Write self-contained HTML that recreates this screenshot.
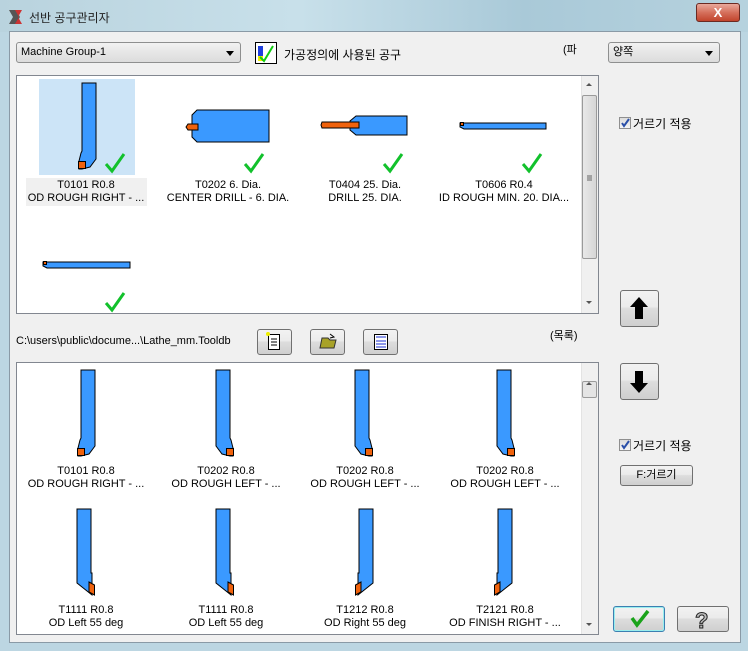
<!DOCTYPE html>
<html><head><meta charset="utf-8"><style>
*{margin:0;padding:0;box-sizing:border-box}
body{width:748px;height:651px;overflow:hidden;position:relative;background:#bcd6e2;font-family:"Liberation Sans","Noto Sans CJK KR",sans-serif;font-size:11px;color:#000}
.a{position:absolute}
.title{left:0;top:0;width:748px;height:32px;background:linear-gradient(90deg,#b9d3de,#c8e0ea 40%,#a9c9d8 70%,#b6d2de);}
.client{left:9px;top:31px;width:732px;height:612px;background:#f0f0f0;border:1px solid #8a9aa6}
.box{background:#fff;border:1px solid #828790}
.combo{height:21px;border:1px solid #8e8f8f;border-radius:3px;background:linear-gradient(#f2f2f2,#e6e6e6 50%,#dcdcdc);font-size:11px;line-height:19px;padding-left:4px}
.combo:after{content:"";position:absolute;right:6px;top:8px;border:4px solid transparent;border-top:5px solid #000}
.btn{border:1px solid #707070;border-radius:3px;background:linear-gradient(#f2f2f2,#ebebeb 45%,#dddddd 50%,#cfcfcf)}
.sb{background:#f0f0f0;border-left:1px solid #e3e3e3}
.lbl{position:absolute;text-align:center;width:140px;line-height:13px;font-size:11px;white-space:nowrap}
.chk{position:absolute;width:12px;height:12px;border:1px solid #8f8f8f;background:linear-gradient(#dcdcdc,#f5f5f5)}
</style></head><body>
<div class="a title"></div>
<svg class="a" style="left:8px;top:8px" width="18" height="18" viewBox="0 0 18 18"><path d="M1,2 L8,2 L12,9 L8,16 L1,16 L5,9Z" fill="#555"/><path d="M7,2 L14,2 L10,9 L14,16 L7,16 L11,9Z" fill="#c33"/></svg>
<div class="a" style="left:29px;top:9px;font-size:12px;color:#222">선반 공구관리자</div>
<div class="a" style="left:696px;top:3px;width:44px;height:19px;border:1px solid #6b2a22;border-radius:3px;background:linear-gradient(#e9a99c,#d5705c 50%,#c1442c);color:#fff;font-weight:bold;font-size:13px;text-align:center;line-height:17px">X</div>
<div class="a client"></div>

<div class="a combo" style="left:16px;top:42px;width:225px">Machine Group-1</div>
<svg class="a" style="left:255px;top:42px" width="22" height="22" viewBox="0 0 22 22"><rect x="0.5" y="0.5" width="21" height="21" fill="#fff" stroke="#000"/><rect x="3" y="4" width="5" height="13" fill="#1f3fdc"/><rect x="3" y="14" width="5" height="5" fill="#ee0"/><path d="M5,15 L9,19 L18,4" stroke="#1c1" stroke-width="2" fill="none"/></svg>
<div class="a" style="left:284px;top:46px;font-size:12px">가공정의에 사용된 공구</div>
<div class="a" style="left:563px;top:41px;font-size:11px">(파</div>
<div class="a combo" style="left:608px;top:42px;width:112px">양쪽</div>

<div class="a box" style="left:16px;top:75px;width:583px;height:239px"></div>
<div class="a sb" style="left:581px;top:76px;width:17px;height:237px"></div>
<div class="a" style="left:582px;top:95px;width:15px;height:164px;border:1px solid #9a9a9a;border-radius:2px;background:linear-gradient(90deg,#e8e8e8,#d6d6d6)"></div>
<div class="a" style="left:39px;top:79px;width:96px;height:96px;background:#cce4f7"></div>
<div class="a" style="left:26px;top:178px;width:121px;height:28px;background:#f0f0f0"></div>

<div class="a" style="left:16px;top:335px;font-size:11px">C:\users\public\docume...\Lathe_mm.Tooldb</div>
<div class="a btn" style="left:257px;top:329px;width:35px;height:26px"></div>
<div class="a btn" style="left:310px;top:329px;width:35px;height:26px"></div>
<div class="a btn" style="left:363px;top:329px;width:35px;height:26px"></div>
<div class="a" style="left:550px;top:327px;font-size:11px">(목록)</div>

<div class="a box" style="left:16px;top:362px;width:583px;height:273px"></div>
<div class="a sb" style="left:581px;top:363px;width:17px;height:271px"></div>
<div class="a" style="left:582px;top:381px;width:15px;height:17px;border:1px solid #9a9a9a;border-radius:2px;background:#e4e4e4"></div>

<div class="a btn" style="left:620px;top:290px;width:39px;height:37px"></div>
<div class="a btn" style="left:620px;top:363px;width:39px;height:37px"></div>
<div class="chk" style="left:619px;top:117px"></div><div class="a" style="left:633px;top:115px;font-size:12px">거르기 적용</div>
<div class="chk" style="left:619px;top:439px"></div><div class="a" style="left:633px;top:437px;font-size:12px">거르기 적용</div>
<div class="a btn" style="left:620px;top:465px;width:73px;height:21px;text-align:center;line-height:19px;font-size:11px">F:거르기</div>
<div class="a btn" style="left:613px;top:606px;width:52px;height:26px;border-color:#3c7fb1;box-shadow:inset 0 0 0 1px #9ee"></div>
<div class="a btn" style="left:677px;top:606px;width:52px;height:26px"></div>

<svg class="a" style="left:0;top:0" width="748" height="651">
<defs>
<g id="ck"><path d="M0,10 L6,17 L18,0" stroke="#12c12c" stroke-width="3" fill="none"/></g>
<g id="tr"><path d="M4,0 H18 V76 L12,84 L4,86 H1 V78 L3,70 L4,68Z" fill="#3a99ff" stroke="#000" stroke-width="1"/><rect x="0.5" y="78.5" width="7" height="7" fill="#f0620c" stroke="#000" stroke-width="1"/></g>
<g id="tl"><path d="M1,0 H15 V68 L16,70 L18,78 V86 H15 L7,84 L1,76Z" fill="#3a99ff" stroke="#000"/><rect x="11.5" y="78.5" width="7" height="7" fill="#f0620c" stroke="#000"/></g>
<g id="r55"><path d="M4,0 H18 V74 L3,86 V64 H4Z" fill="#3a99ff" stroke="#000"/><path d="M0.5,76 L6,73 V83 L0.5,86Z" fill="#f0620c" stroke="#000"/></g>
<g id="l55"><path d="M1,0 H15 V64 H16 V86 L1,74Z" fill="#3a99ff" stroke="#000"/><path d="M18.5,76 L13,73 V83 L18.5,86Z" fill="#f0620c" stroke="#000"/></g>
</defs>
<use href="#tr" x="78" y="83"/>
<use href="#ck" x="106" y="154"/>
<path d="M197,110 H269 V142 H197 L192,137 V115Z" fill="#3a99ff" stroke="#000"/>
<path d="M186,127 L188,124 H198 V130 H188Z" fill="#f0620c" stroke="#000"/>
<use href="#ck" x="245" y="154"/>
<path d="M356,116 H407 V135 H356 L350,130 V121Z" fill="#3a99ff" stroke="#000"/>
<path d="M322,122 H359 V128 H322 L321,125Z" fill="#f0620c" stroke="#000"/>
<use href="#ck" x="384" y="154"/>
<path d="M460,123 H546 V129 H464 L460,127Z" fill="#3a99ff" stroke="#000"/>
<rect x="460.5" y="122.5" width="3" height="3" fill="#f0620c" stroke="#000"/>
<use href="#ck" x="523" y="154"/>
<path d="M43,262 H130 V268 H47 L43,266Z" fill="#3a99ff" stroke="#000"/>
<rect x="43.5" y="261.5" width="3" height="3" fill="#f0620c" stroke="#000"/>
<use href="#ck" x="106" y="293"/>

<use href="#tr" x="77" y="370"/>
<use href="#tl" x="215" y="370"/>
<use href="#tl" x="354" y="370"/>
<use href="#tl" x="496" y="370"/>
<use href="#l55" x="76" y="509"/>
<use href="#l55" x="215" y="509"/>
<use href="#r55" x="355" y="509"/>
<use href="#r55" x="494" y="509"/>

<!-- scroll arrows -->
<path d="M586,86 L589,83 L592,86Z" fill="#555"/><path d="M586,301 L589,304 L592,301Z" fill="#555"/>
<path d="M587,176 H592 M587,178 H592 M587,180 H592" stroke="#666"/>
<path d="M586,389 L589,386 L592,389Z" fill="#555" transform="translate(0,-4)"/>
<path d="M586,623 L589,626 L592,623Z" fill="#555"/>
<!-- arrows -->
<path d="M639,297 L630,307 H635 V319 H643 V307 H648Z" fill="#000"/>
<path d="M639,393 L630,383 H635 V371 H643 V383 H648Z" fill="#000"/>
<!-- checkbox ticks -->
<path d="M622,123 L624,126 L629,119" stroke="#2a4fa8" stroke-width="2" fill="none"/>
<path d="M622,445 L624,448 L629,441" stroke="#2a4fa8" stroke-width="2" fill="none"/>
<!-- ok / help -->
<path d="M632,618 L637,625 L648,611" stroke="#1aa31a" stroke-width="3.5" fill="none"/>
<text x="695" y="628" font-family="Liberation Sans" font-weight="bold" font-size="22" fill="#bbb" stroke="#222" stroke-width="1">?</text>
<!-- toolbar icons -->
<rect x="268.5" y="334.5" width="11" height="15" fill="#fff" stroke="#000"/><path d="M271,339H277M271,342H277M271,345H277" stroke="#000"/><circle cx="268" cy="334" r="2" fill="#ee0"/>
<path d="M320,348 L322,338 H328 L330,340 H336 L334,348Z" fill="#a8a228" stroke="#333"/><path d="M330,334 L334,337 L330,338" stroke="#000" fill="none"/>
<rect x="374.5" y="334.5" width="13" height="15" fill="#fff" stroke="#000"/><path d="M376,337H386M376,341H386M376,344H386M376,347H386" stroke="#1a2fd0"/>
</svg>

<div class="lbl" style="left:16px;top:179px">T0101 R0.8<br>OD ROUGH RIGHT - ...</div>
<div class="lbl" style="left:158px;top:179px">T0202 6. Dia.<br>CENTER DRILL - 6. DIA.</div>
<div class="lbl" style="left:295px;top:179px">T0404 25. Dia.<br>DRILL 25. DIA.</div>
<div class="lbl" style="left:434px;top:179px">T0606 R0.4<br>ID ROUGH MIN. 20. DIA...</div>

<div class="lbl" style="left:16px;top:465px">T0101 R0.8<br>OD ROUGH RIGHT - ...</div>
<div class="lbl" style="left:156px;top:465px">T0202 R0.8<br>OD ROUGH LEFT - ...</div>
<div class="lbl" style="left:295px;top:465px">T0202 R0.8<br>OD ROUGH LEFT - ...</div>
<div class="lbl" style="left:435px;top:465px">T0202 R0.8<br>OD ROUGH LEFT - ...</div>
<div class="lbl" style="left:16px;top:604px">T1111 R0.8<br>OD Left 55 deg</div>
<div class="lbl" style="left:156px;top:604px">T1111 R0.8<br>OD Left 55 deg</div>
<div class="lbl" style="left:295px;top:604px">T1212 R0.8<br>OD Right 55 deg</div>
<div class="lbl" style="left:435px;top:604px">T2121 R0.8<br>OD FINISH RIGHT - ...</div>
</body></html>
